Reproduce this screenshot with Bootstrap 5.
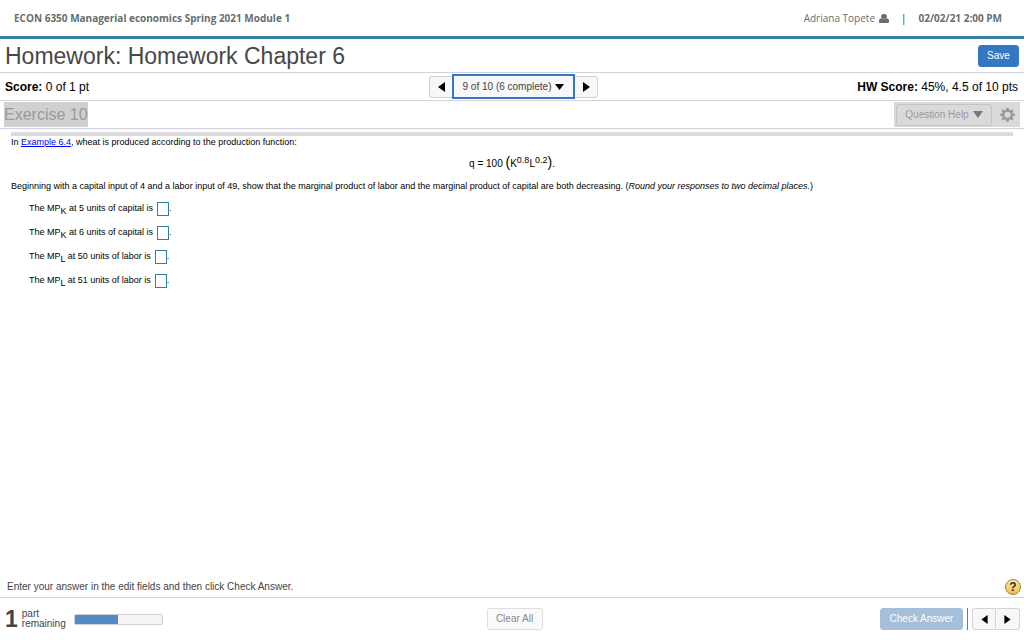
<!DOCTYPE html>
<html lang="en">
<head>
<meta charset="utf-8">
<meta name="viewport" content="width=device-width, initial-scale=1">
<title>Homework Chapter 6</title>
<link href="https://cdn.jsdelivr.net/npm/bootstrap@5.3.0/dist/css/bootstrap.min.css" rel="stylesheet">
<style>
  body { font-family: "Liberation Sans", Arial, sans-serif; font-size: 10px; line-height: 16px; color: #000; background: #fff; }
  .course-bar { height: 39px; border-bottom: 3px solid #337fa0; font-family: "Open Sans", sans-serif; color: #666e6e; padding: 0 22px 0 14px; }
  .rule { border-bottom: 1px solid #d3d3e0; }
  .title-row { height: 34px; padding: 0 5px; }
  .title-row h1 { font-size: 23px; line-height: 32px; color: #484848; }
  .score-row { height: 28px; padding: 0 6px 0 5px; font-size: 12px; }
  .tool-row { height: 28px; padding: 0 4px; }
  .tool-row h2 { font-size: 16px; line-height: 25px; color: #999; background: #d0d0d0; }
  .ctl { font-size: 10px; line-height: 20px; border: 1px solid #d4d4d4; border-radius: 3px; background: #f7f7f7; color: #444; padding: 0; height: 22px; }
  .ctl svg, .help-tools svg { display: block; fill: currentColor; }
  .ctl-arrow { color: #000; width: 24px; display: flex; align-items: center; justify-content: center; }
  .ctl-current { width: 123px; height: 25px; border: 2px solid #3478c4; border-radius: 0; }
  .score-row .ctl-arrow { width: 23px; }
  .ctl-save { width: 41px; background: #3478c4; border-color: #3478c4; color: #fff; }
  .help-tools { background: #d9d9d9; height: 25px; padding: 0 5px 0 2px; color: #999; }
  .ctl-help { width: 96px; background: #d9d9d9; border-color: #c4c4c4; color: #999; }
  .ctl-help svg { color: #777; }
  .gear { width: 15px; height: 15px; color: #999; background: none; }
  .divider-bar { height: 4px; margin: 3px 11px 0; background: #dcdcdc; }
  main { padding: 0 11px; font-size: 9px; line-height: 12px; }
  main a { color: #00f; }
  .formula { font-size: 10px; line-height: 32px; }
  .formula sup { font-size: 9px; }
  .paren { font-size: 14px; line-height: 0; }
  .answers { padding-left: 18px; margin-top: 4px; }
  .answer-line { height: 24px; line-height: 24px; }
  .answer-line sub { font-size: 9px; bottom: -3px; line-height: 0; }
  .answer-box { width: 12px; height: 14px; border: 1px solid #337fa0; padding: 0; margin: 0 0 0 4px; border-radius: 0; vertical-align: middle; font-size: 9px; }
  .hint-row { height: 21px; padding: 0 3px 0 7px; color: #444; }
  .help-ball { width: 16px; height: 16px; border: 1px solid #9a8045; border-radius: 50%; background: linear-gradient(#ffe9a5, #f3bd49); font-size: 12px; line-height: 14px; font-weight: 700; color: #333; padding: 0; }
  .foot-row { height: 42px; padding: 0 4px 0 5px; color: #444; }
  .part-count { font-size: 23px; line-height: 24px; font-weight: 700; }
  .part-label { line-height: 10px; }
  .part-progress { width: 89px; height: 11px; border: 1px solid #d0d0d0; border-radius: 2px; background: #f4f4f4; }
  .part-progress .progress-bar { background: #5589c7; }
  .ctl-clear { width: 56px; border-color: #dedede; background: #fafafa; color: #888; }
  .ctl-check { width: 83px; background: #a5bfd9; border-color: #a5bfd9; color: #fff; }
  .foot-sep { width: 1px; height: 22px; background: #777; }
</style>
</head>
<body class="d-flex flex-column min-vh-100">
<header>
  <div class="course-bar d-flex justify-content-between align-items-center">
    <strong>ECON 6350 Managerial economics Spring 2021 Module 1</strong>
    <div class="d-flex align-items-center">
      <span>Adriana Topete</span>
      <svg class="ms-1" width="10" height="9" viewBox="0 0 8 9" preserveAspectRatio="none" fill="currentColor" aria-hidden="true"><circle cx="4" cy="2.4" r="2.3"/><path d="M0 8.2V6.4Q0 4.3 2 4.2Q4 5.7 6 4.2Q8 4.3 8 6.4V8.2Q8 9 7.2 9H.8Q0 9 0 8.2Z"/></svg>
      <span class="px-2 mx-1 text-dark">|</span>
      <strong>02/02/21 2:00 PM</strong>
    </div>
  </div>
  <div class="title-row rule d-flex justify-content-between align-items-center">
    <h1 class="m-0 fw-normal">Homework: Homework Chapter 6</h1>
    <button type="button" class="ctl ctl-save">Save</button>
  </div>
  <div class="score-row rule row g-0 align-items-center">
    <div class="col"><strong>Score:</strong> 0 of 1 pt</div>
    <nav class="col-auto d-flex align-items-center ms-1" aria-label="Questions">
      <button type="button" class="ctl ctl-arrow rounded-end-0 border-end-0" aria-label="Previous question"><svg width="7" height="10" viewBox="0 0 7 10"><path d="M7 0V10L0 5Z"/></svg></button>
      <button type="button" class="ctl ctl-current d-flex align-items-center justify-content-center gap-1">9 of 10 (6 complete)<svg width="9" height="6" viewBox="0 0 9 6" color="#000"><path d="M0 0H9L4.500 6Z"/></svg></button>
      <button type="button" class="ctl ctl-arrow rounded-start-0 border-start-0" aria-label="Next question"><svg width="7" height="10" viewBox="0 0 7 10"><path d="M0 0V10L7 5Z"/></svg></button>
    </nav>
    <div class="col text-end"><strong>HW Score:</strong> 45%, 4.5 of 10 pts</div>
  </div>
  <div class="tool-row rule d-flex justify-content-between align-items-center">
    <h2 class="m-0 fw-normal">Exercise 10</h2>
    <div class="help-tools d-flex align-items-center gap-2">
      <button type="button" class="ctl ctl-help d-flex align-items-center justify-content-center gap-1">Question Help<svg width="10" height="7" viewBox="0 0 10 7"><path d="M0 0H10L5 7Z"/></svg></button>
      <button type="button" class="gear border-0 p-0" aria-label="Settings"><svg width="15" height="15" viewBox="0 0 16 16"><path fill-rule="evenodd" d="M6.700 1H9.300L9.800 3.200L11.200 3.800L13 2.500L14.500 4L13.200 5.900L13.700 7L16 7.300V9.200L13.700 9.700L13.200 10.900L14.500 12.700L12.900 14.200L11 13L9.800 13.500L9.300 15.700H6.700L6.200 13.500L5 13L3.100 14.200L1.500 12.700L2.800 10.900L2.300 9.700L0 9.200V7.300L2.300 7L2.800 5.900L1.500 4L3 2.500L4.900 3.800L6.200 3.200ZM8 5.100A3.200 3.200 0 1 0 8 11.500A3.200 3.200 0 1 0 8 5.100Z"/></svg></button>
    </div>
  </div>
</header>
<div class="divider-bar"></div>
<main class="flex-grow-1">
  <p class="m-0">In <a href="#">Example 6.4</a>, wheat is produced according to the production function:</p>
  <p class="formula m-0 text-center">q = 100 <span class="paren">(</span>K<sup>0.8</sup>L<sup>0.2</sup><span class="paren">)</span>.</p>
  <p class="m-0">Beginning with a capital input of 4 and a labor input of 49, show that the marginal product of labor and the marginal product of capital are both decreasing. (<em>Round your responses to two decimal places.</em>)</p>
  <div class="answers">
    <div class="answer-line"><label for="k5">The MP<sub>K</sub> at 5 units of capital is</label><input class="answer-box" type="text" id="k5">.</div>
    <div class="answer-line"><label for="k6">The MP<sub>K</sub> at 6 units of capital is</label><input class="answer-box" type="text" id="k6">.</div>
    <div class="answer-line"><label for="l50">The MP<sub>L</sub> at 50 units of labor is</label><input class="answer-box" type="text" id="l50">.</div>
    <div class="answer-line"><label for="l51">The MP<sub>L</sub> at 51 units of labor is</label><input class="answer-box" type="text" id="l51">.</div>
  </div>
</main>
<footer>
  <div class="hint-row rule d-flex justify-content-between align-items-center">
    <span>Enter your answer in the edit fields and then click Check Answer.</span>
    <button type="button" class="help-ball" aria-label="Help">?</button>
  </div>
  <div class="foot-row row g-0 align-items-center">
    <div class="col d-flex align-items-center">
      <span class="part-count">1</span>
      <span class="part-label ms-1">part<br>remaining</span>
      <div class="part-progress progress ms-2" role="progressbar" aria-label="Parts done" aria-valuenow="50" aria-valuemin="0" aria-valuemax="100"><div class="progress-bar" style="width: 50%"></div></div>
    </div>
    <div class="col-auto ms-1"><button type="button" class="ctl ctl-clear">Clear All</button></div>
    <div class="col d-flex justify-content-end align-items-center">
      <button type="button" class="ctl ctl-check">Check Answer</button>
      <span class="foot-sep mx-1"></span>
      <button type="button" class="ctl ctl-arrow rounded-end-0" aria-label="Previous"><svg width="7" height="9" viewBox="0 0 7 10"><path d="M7 0V10L0 5Z"/></svg></button>
      <button type="button" class="ctl ctl-arrow rounded-start-0 border-start-0" aria-label="Next"><svg width="7" height="9" viewBox="0 0 7 10"><path d="M0 0V10L7 5Z"/></svg></button>
    </div>
  </div>
</footer>
<script src="https://cdn.jsdelivr.net/npm/bootstrap@5.3.0/dist/js/bootstrap.bundle.min.js"></script>
</body>
</html>
